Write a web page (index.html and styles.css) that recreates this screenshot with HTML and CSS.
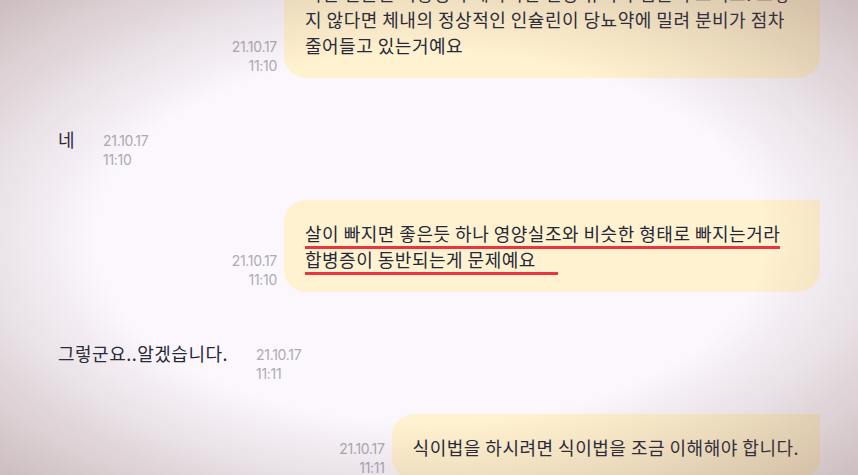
FILE: index.html
```html
<html>
<head>
    <meta charset="UTF-8">
    <meta name="viewport" content="width=device-width, initial-scale=1.0">
    <title>상담 대화</title>
    <link rel="stylesheet" href="styles.css">
</head>
<body>
    <div class="chat">
        <div class="msg sent">
            <div class="time">21.10.17<br>11:10</div>
            <div class="bubble">이런 인슐린 저항성이 계속되면 혈당 유지가 힘들어 보여요. 그렇<br>지 않다면 체내의 정상적인 인슐린이 당뇨약에 밀려 분비가 점차 줄어들고 있는거예요</div>
        </div>
        <div class="msg recv">
            <div class="bubble">네</div>
            <div class="time">21.10.17<br>11:10</div>
        </div>
        <div class="msg sent">
            <div class="time">21.10.17<br>11:10</div>
            <div class="bubble"><span class="mark">살이 빠지면 좋은듯 하나 영양실조와 비슷한 형태로 빠지는거라 합병증이 동반되는게 문제예요</span></div>
        </div>
        <div class="msg recv">
            <div class="bubble">그렇군요..알겠습니다.</div>
            <div class="time">21.10.17<br>11:11</div>
        </div>
        <div class="msg sent">
            <div class="time">21.10.17<br>11:11</div>
            <div class="bubble">식이법을 하시려면 식이법을 조금 이해해야 합니다.</div>
        </div>
    </div>
    <div class="vignette"></div>
</body>
</html>
```

FILE: styles.css
```css
body{
    margin: 0;
    height: 475px;
    overflow: hidden;
    background: #fbf7fd;
    font-family: "Noto Sans CJK KR", "Noto Sans", sans-serif;
    color: #262838;
}
.chat{
    display: flex;
    flex-direction: column;
    gap: 28px;
    margin-top: -40px;
    padding: 0 38px 0 37px;
}
.msg{
    display: flex;
    align-items: flex-end;
    gap: 7px;
}
.sent{
    justify-content: flex-end;
}
.recv{
    justify-content: flex-start;
}
.bubble{
    max-width: 494px;
    padding: 20px 21px;
    font-size: 18px;
    line-height: 26px;
    letter-spacing: 0.5px;
    word-break: keep-all;
}
.sent .bubble{
    background: #fff2d0;
    border-radius: 22px 0 22px 22px;
}
.time{
    margin-bottom: 3px;
    font-family: Inter, "Liberation Sans", sans-serif;
    font-size: 14px;
    line-height: 19px;
    letter-spacing: -0.3px;
    color: #adaab4;
}
.sent .time{
    text-align: right;
}
.mark{
    padding: 0 22px 3px 0;
    background: linear-gradient(#e8363e, #e8363e) no-repeat left bottom / 100% 3px;
}
.vignette{
    position: fixed;
    top: 0;
    left: 0;
    right: 0;
    bottom: 0;
    pointer-events: none;
    background: radial-gradient(ellipse at center, rgba(115,80,75,0) 55%, rgba(115,80,75,.12) 72%, rgba(115,80,75,.34) 100%);
}
```
